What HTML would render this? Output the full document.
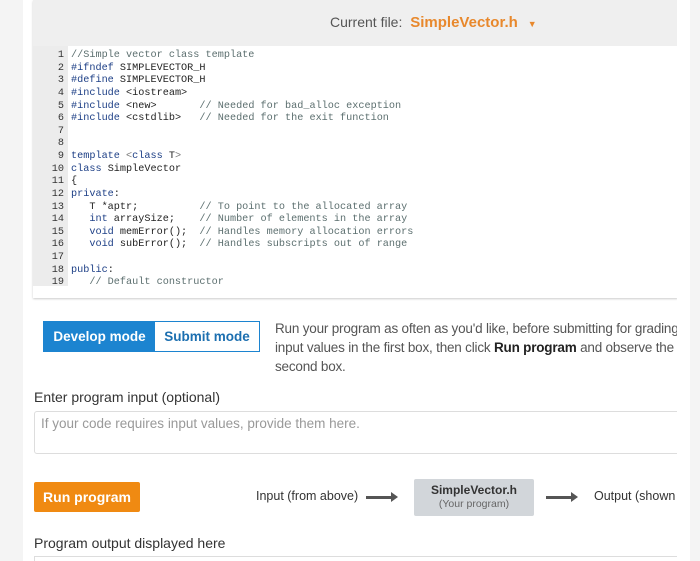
<!DOCTYPE html>
<html><head><style>
body{margin:0;width:700px;height:561px;background:#f4f4f4;font-family:"Liberation Sans",sans-serif;overflow:hidden;position:relative}
.card{position:absolute;left:23px;top:0;width:667px;height:561px;background:#fff}
.clip{position:absolute;left:0;top:0;width:677px;height:561px;overflow:hidden}
.ed{position:absolute;left:33px;top:0;width:645px;height:298px;background:#fff;box-shadow:0 1px 2px #ccc}
.hd{height:46px;background:#efefef;position:relative}
.hd .t{position:absolute;left:297px;top:14px;font-size:14px;color:#555}
.hd .f{color:#e8882c;font-weight:bold;font-size:15px;margin-left:4px}
.gut{position:absolute;left:0;top:46px;width:35px;height:240px;background:#ececec}
pre{position:absolute;left:0;top:50px;margin:0;font-family:"Liberation Mono",monospace;font-size:10.2px;line-height:12.63px;color:#222}
.n{display:inline-block;width:31px;text-align:right;color:#333;margin-right:7px}
.k{color:#1d3f86}.c{color:#5c6f6f}.s{color:#777}
.mode{position:absolute;left:43px;top:321px;width:215px;height:29px;border:1px solid #1c84d0;display:flex;font-weight:bold;font-size:13.5px}
.mode div{display:flex;align-items:center;justify-content:center}
.txt{position:absolute;left:275px;top:319px;font-size:13.5px;color:#555;line-height:19px;white-space:nowrap;letter-spacing:-0.2px}
.lbl{position:absolute;left:34px;font-size:14px;color:#333}
.inp{position:absolute;left:34px;top:411px;width:660px;height:43px;border:1px solid #ddd;border-radius:3px;font-size:13.5px;color:#999;padding:4px 6px;box-sizing:border-box}
.run{position:absolute;left:34px;top:482px;width:106px;height:30px;background:#f08a12;color:#fff;font-weight:bold;font-size:14px;display:flex;align-items:center;justify-content:center;border-radius:2px}
.sm{position:absolute;font-size:12.5px;color:#333;white-space:nowrap}
.arr{position:absolute;height:3px;background:#555}
.arr:after{content:"";position:absolute;right:-6px;top:-4px;border-left:7px solid #555;border-top:5.5px solid transparent;border-bottom:5.5px solid transparent}
</style></head><body>
<div class="card"></div>
<div class="clip">
<div class="ed">
<div class="hd"><div class="t">Current file: <span class="f">SimpleVector.h</span> <span style="color:#e8882c;font-size:9px;margin-left:6px">▼</span></div></div>
<div class="gut"></div>
<pre><span class="n">1</span><span class="c">//Simple vector class template</span>
<span class="n">2</span><span class="k">#ifndef</span> SIMPLEVECTOR_H
<span class="n">3</span><span class="k">#define</span> SIMPLEVECTOR_H
<span class="n">4</span><span class="k">#include</span> &lt;iostream&gt;
<span class="n">5</span><span class="k">#include</span> &lt;new&gt;       <span class="c">// Needed for bad_alloc exception</span>
<span class="n">6</span><span class="k">#include</span> &lt;cstdlib&gt;   <span class="c">// Needed for the exit function</span>
<span class="n">7</span>
<span class="n">8</span>
<span class="n">9</span><span class="k">template</span> <span class="s">&lt;</span><span class="k">class</span> T<span class="s">&gt;</span>
<span class="n">10</span><span class="k">class</span> SimpleVector
<span class="n">11</span>{
<span class="n">12</span><span class="k">private</span>:
<span class="n">13</span>   T *aptr;          <span class="c">// To point to the allocated array</span>
<span class="n">14</span>   <span class="k">int</span> arraySize;    <span class="c">// Number of elements in the array</span>
<span class="n">15</span>   <span class="k">void</span> memError();  <span class="c">// Handles memory allocation errors</span>
<span class="n">16</span>   <span class="k">void</span> subError();  <span class="c">// Handles subscripts out of range</span>
<span class="n">17</span>
<span class="n">18</span><span class="k">public</span>:
<span class="n">19</span>   <span class="c">// Default constructor</span></pre>
</div>
<div class="mode"><div style="width:111px;background:#1c84d0;color:#fff">Develop mode</div><div style="flex:1;color:#1c6fb0">Submit mode</div></div>
<div class="txt">Run your program as often as you'd like, before submitting for grading. Below, type any<br>input values in the first box, then click <b style="color:#222">Run program</b> and observe the program's output in the<br>second box.</div>
<div class="lbl" style="top:389px">Enter program input (optional)</div>
<div class="inp">If your code requires input values, provide them here.</div>
<div class="run">Run program</div>
<div class="sm" style="left:256px;top:489px">Input (from above)</div>
<div class="arr" style="left:366px;top:496px;width:26px"></div>
<div style="position:absolute;left:414px;top:479px;width:120px;height:37px;background:#d2d6da;border-radius:2px;text-align:center">
<div style="font-size:12px;font-weight:bold;color:#333;margin-top:4px">SimpleVector.h</div>
<div style="font-size:10.5px;color:#666;margin-top:1px">(Your program)</div></div>
<div class="arr" style="left:546px;top:496px;width:26px"></div>
<div class="sm" style="left:594px;top:489px">Output (shown below)</div>
<div class="lbl" style="top:535px">Program output displayed here</div>
<div style="position:absolute;left:34px;top:556px;width:660px;height:10px;border:1px solid #ddd"></div>
</div>
</body></html>
